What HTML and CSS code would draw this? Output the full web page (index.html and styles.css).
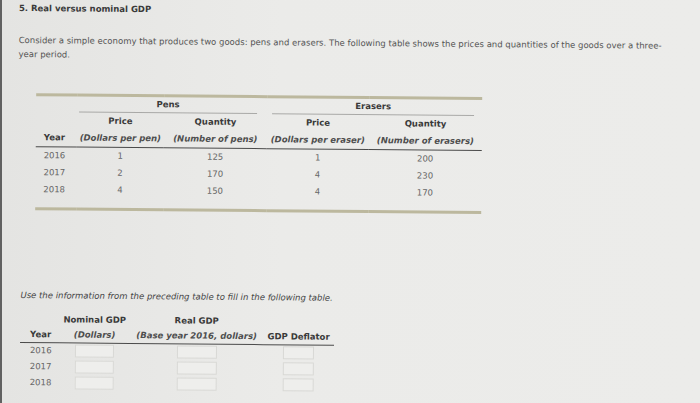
FILE: index.html
```html
<!DOCTYPE html>
<html>
<head>
<meta charset="utf-8">
<link rel="stylesheet" href="styles.css">
</head>
<body>
<div class="page">
  <div class="content">
    <h1 class="title">5. Real versus nominal GDP</h1>
    <p class="intro">Consider a simple economy that produces two goods: pens and erasers. The following table shows the prices and quantities of the goods over a three-year period.</p>

    <table class="prices">
      <colgroup>
        <col class="c-year"><col class="c-pp"><col class="c-pq"><col class="c-ep"><col class="c-eq">
      </colgroup>
      <tr class="grp">
        <td></td>
        <td colspan="2"><div class="grp-label pens">Pens</div></td>
        <td colspan="2"><div class="grp-label erasers">Erasers</div></td>
      </tr>
      <tr class="h1">
        <td></td><td>Price</td><td>Quantity</td><td>Price</td><td>Quantity</td>
      </tr>
      <tr class="h2">
        <td class="yr">Year</td>
        <td class="unit">(Dollars per pen)</td>
        <td class="unit">(Number of pens)</td>
        <td class="unit">(Dollars per eraser)</td>
        <td class="unit">(Number of erasers)</td>
      </tr>
      <tr class="row">
        <td class="yr">2016</td><td>1</td><td>125</td><td>1</td><td>200</td>
      </tr>
      <tr class="row">
        <td class="yr">2017</td><td>2</td><td>170</td><td>4</td><td>230</td>
      </tr>
      <tr class="row last">
        <td class="yr">2018</td><td>4</td><td>150</td><td>4</td><td>170</td>
      </tr>
    </table>

    <p class="instr">Use the information from the preceding table to fill in the following table.</p>

    <table class="gdp">
      <colgroup>
        <col class="g-year"><col class="g-nom"><col class="g-real"><col class="g-defl">
      </colgroup>
      <tr class="h1">
        <td></td><td>Nominal GDP</td><td>Real GDP</td><td></td>
      </tr>
      <tr class="h2">
        <td class="yr">Year</td>
        <td class="unit">(Dollars)</td>
        <td class="unit">(Base year 2016, dollars)</td>
        <td class="bold">GDP Deflator</td>
      </tr>
      <tr class="row">
        <td class="yr">2016</td>
        <td><span class="box w-nom"></span></td>
        <td><span class="box w-real"></span></td>
        <td><span class="box w-defl"></span></td>
      </tr>
      <tr class="row">
        <td class="yr">2017</td>
        <td><span class="box w-nom"></span></td>
        <td><span class="box w-real"></span></td>
        <td><span class="box w-defl"></span></td>
      </tr>
      <tr class="row">
        <td class="yr">2018</td>
        <td><span class="box w-nom"></span></td>
        <td><span class="box w-real"></span></td>
        <td><span class="box w-defl"></span></td>
      </tr>
    </table>
  </div>
</div>
</body>
</html>
```
FILE: styles.css
```css
html, body {
  margin: 0;
  padding: 0;
}

body {
  background: #e9e9e7;
  font-family: "DejaVu Sans", Verdana, sans-serif;
  color: #555;
}

.page {
  height: 403px;
  box-sizing: border-box;
  border-left: 2px solid #616161;
  padding: 3px 0 0 17px;
  overflow: hidden;
  background: linear-gradient(90deg, #e4e4e2 0%, #ebebe9 40%, #ececea 100%);
}

.content {
  transform: rotate(0.5deg);
  transform-origin: 0 0;
}

.title {
  margin: 0;
  font-size: 8.5px;
  line-height: 10px;
  font-weight: bold;
  color: #3a3a3a;
}

.intro {
  margin: 20px 0 0;
  width: 645px;
  font-size: 8.5px;
  line-height: 14px;
  color: #555;
}

/* ---------- price table ---------- */
.prices {
  margin: 32px 0 0 18px;
  border-collapse: collapse;
  width: 446px;
  table-layout: fixed;
  border-top: 3px solid #bcb89e;
  border-bottom: 3px solid #bcb89e;
  font-size: 8.5px;
}

.prices td {
  padding: 0;
  text-align: center;
  vertical-align: top;
}

.c-year { width: 41px; }
.c-pp   { width: 87px; }
.c-pq   { width: 103px; }
.c-ep   { width: 102px; }
.c-eq   { width: 113px; }

.grp-label {
  font-weight: bold;
  color: #3a3a3a;
  line-height: 15px;
  border-bottom: 1px solid #a9a9a7;
}

.grp-label.pens { margin: 0 10px 0 2px; }
.grp-label.erasers { margin: 0 8px 0 5px; }

.prices .h1 td {
  height: 17px;
  line-height: 17px;
  font-weight: bold;
  color: #3a3a3a;
}

.prices .h2 td {
  height: 17px;
  line-height: 17px;
  border-bottom: 1px solid #4a4a4a;
}

.unit {
  font-style: italic;
  font-weight: bold;
  color: #4e4e4e;
  white-space: nowrap;
}

.prices .h2 .yr {
  font-weight: bold;
  color: #3a3a3a;
}

.prices td.yr {
  text-align: left;
  padding-left: 8px;
}

.prices .row td {
  line-height: 17px;
  color: #666;
}

.prices .row.last td {
  padding-bottom: 9px;
}

/* ---------- instruction ---------- */
.instr {
  margin: 80px 0 0 4px;
  font-size: 8.5px;
  line-height: 10px;
  font-style: italic;
  color: #444;
}

/* ---------- gdp table ---------- */
.gdp {
  margin: 12px 0 0 4px;
  border-collapse: collapse;
  width: 314px;
  table-layout: fixed;
  font-size: 8.5px;
}

.gdp td {
  padding: 0;
  text-align: center;
  vertical-align: top;
  white-space: nowrap;
}

.g-year { width: 39px; }
.g-nom  { width: 71px; }
.g-real { width: 133px; }
.g-defl { width: 71px; }

.gdp .h1 td {
  height: 14px;
  line-height: 14px;
  font-weight: bold;
  color: #3a3a3a;
}

.gdp .h2 td {
  height: 16px;
  line-height: 16px;
  border-bottom: 1px solid #4a4a4a;
}

.gdp .h2 .yr,
.gdp .bold {
  font-weight: bold;
  color: #3a3a3a;
}

.gdp td.yr {
  text-align: left;
  padding-left: 10px;
}

.gdp .row td {
  height: 16px;
  line-height: 14px;
  color: #666;
}

.box {
  display: inline-block;
  height: 13px;
  margin-top: 1px;
  vertical-align: top;
  box-sizing: border-box;
  border: 1px solid #d8d8d5;
  background: #eeeeec;
}

.w-nom  { width: 39px; }
.w-real { width: 40px; }
.w-defl { width: 31px; }
```
